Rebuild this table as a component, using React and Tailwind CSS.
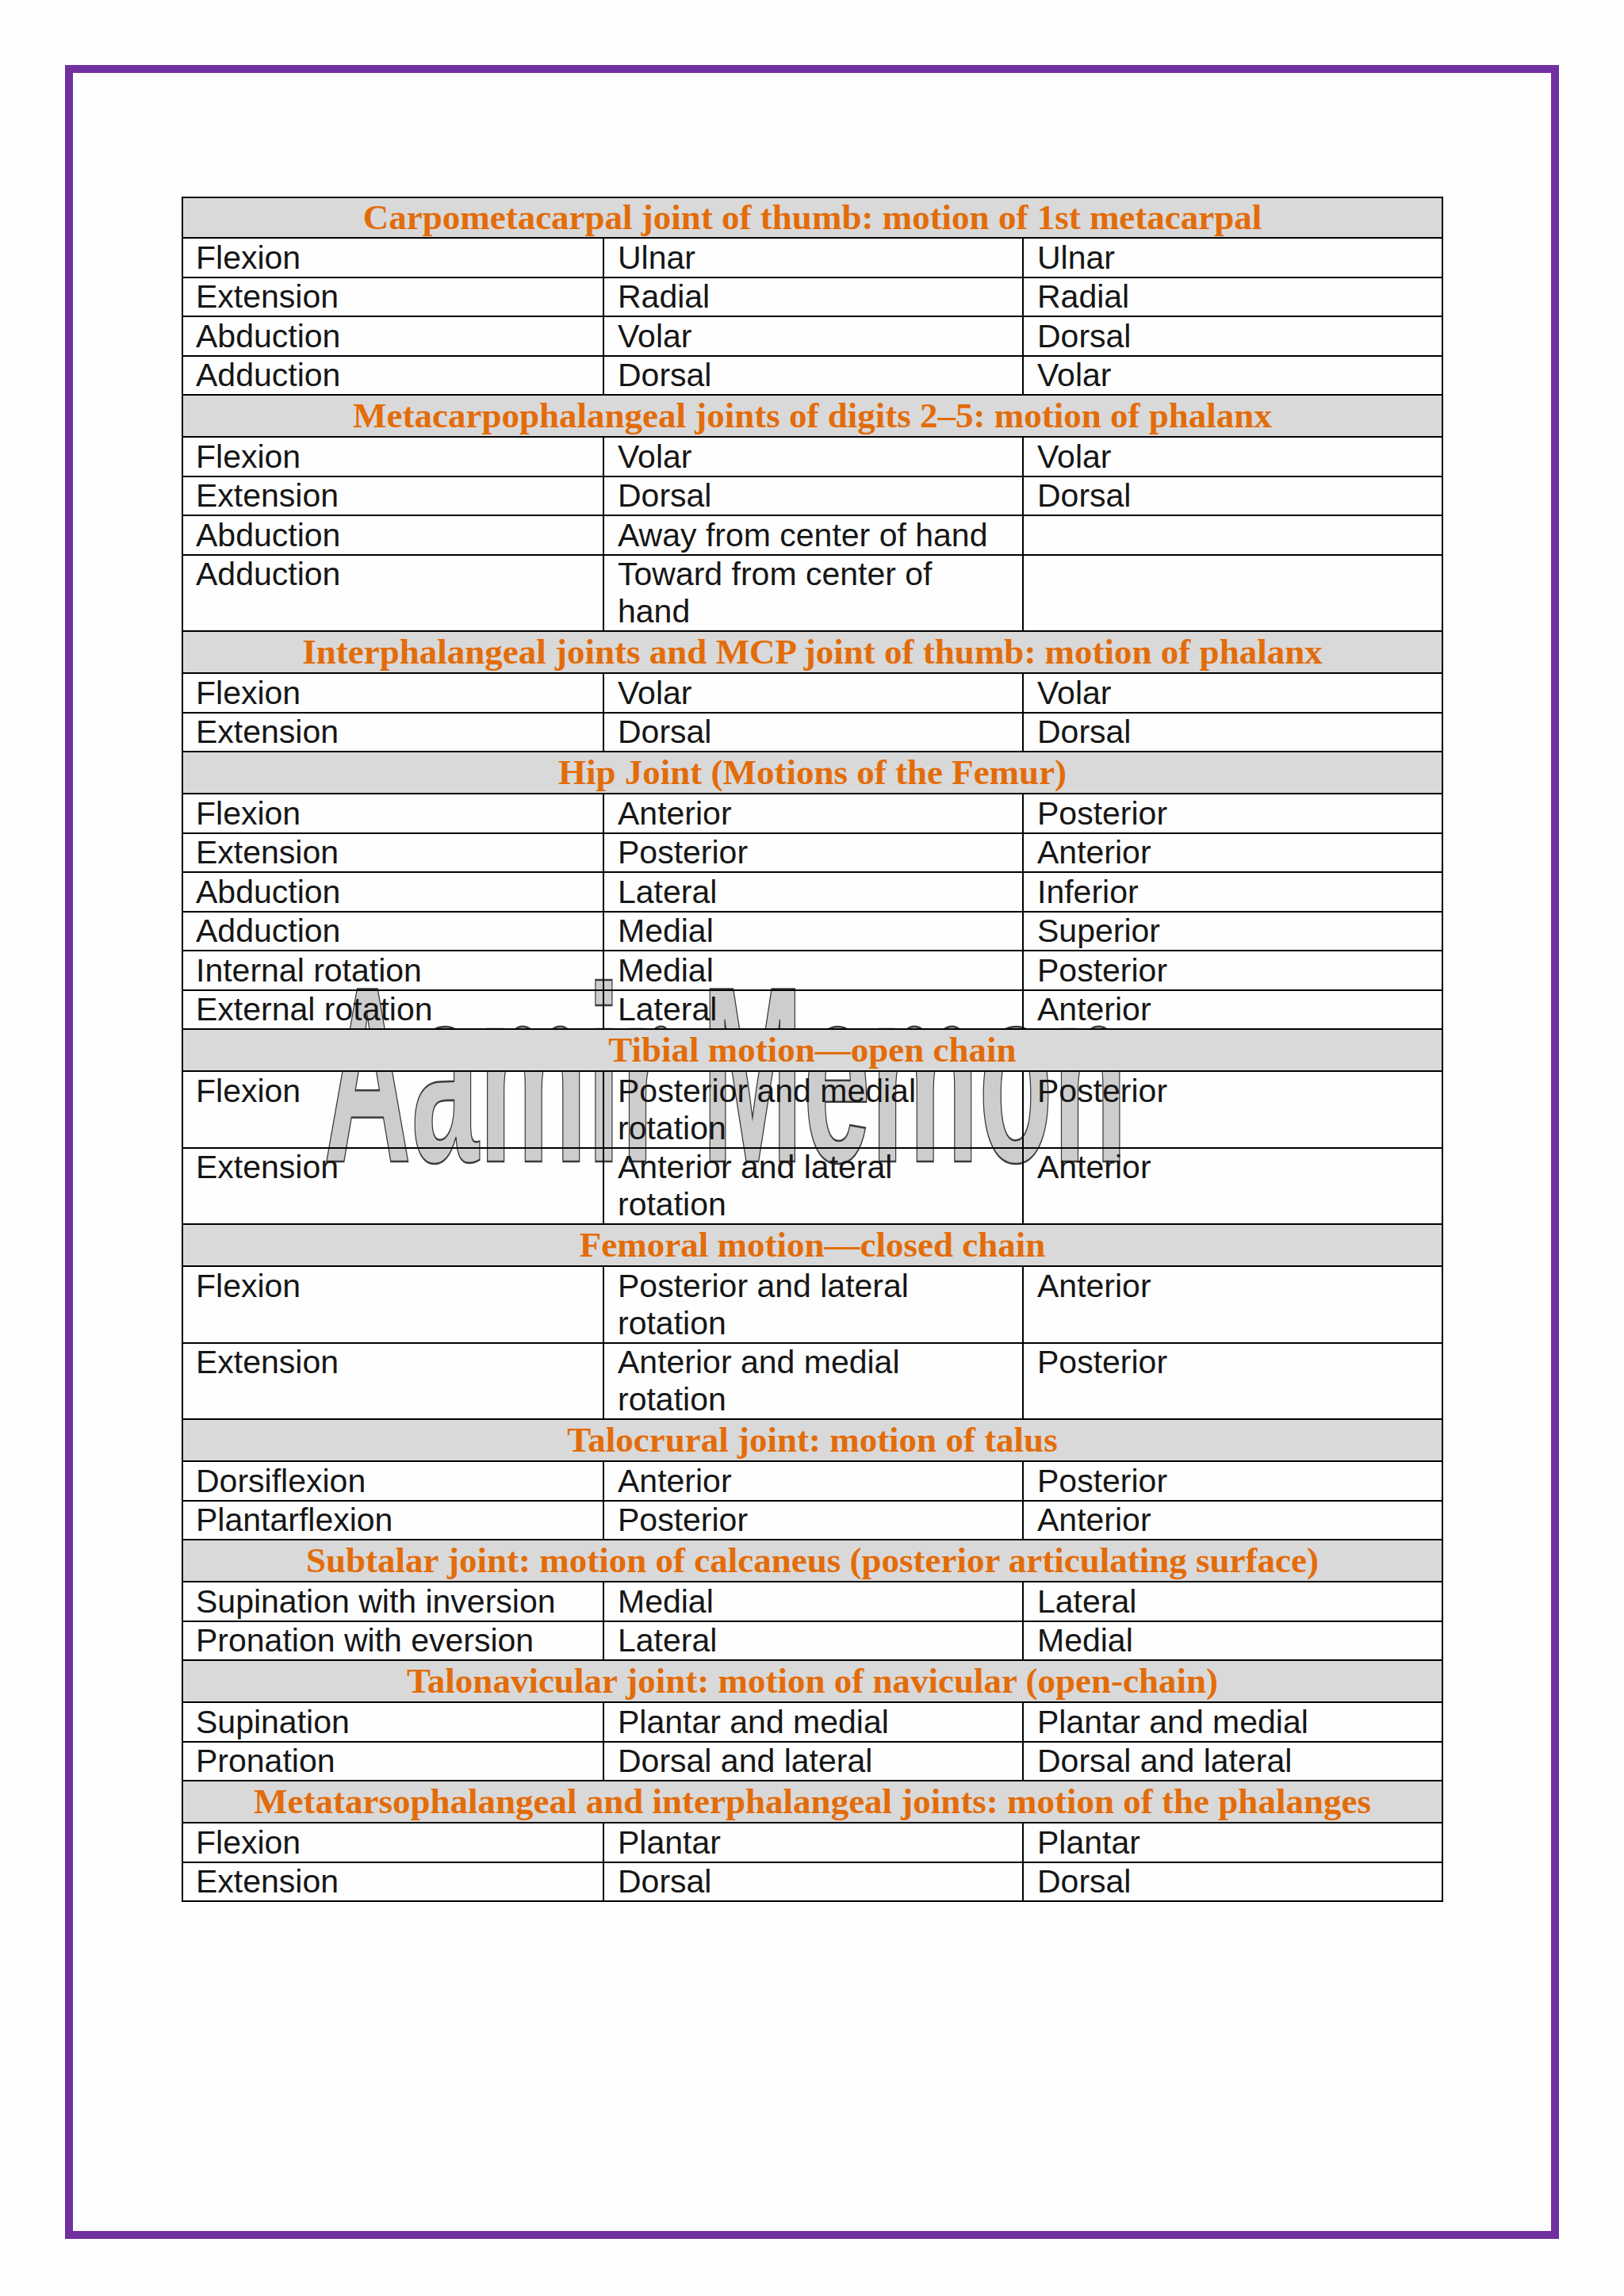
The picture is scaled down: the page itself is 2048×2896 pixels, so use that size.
const sections = [
  {
    title: "Carpometacarpal joint of thumb: motion of 1st metacarpal",
    rows: [
      ["Flexion", "Ulnar", "Ulnar"],
      ["Extension", "Radial", "Radial"],
      ["Abduction", "Volar", "Dorsal"],
      ["Adduction", "Dorsal", "Volar"],
    ],
  },
  {
    title: "Metacarpophalangeal joints of digits 2–5: motion of phalanx",
    rows: [
      ["Flexion", "Volar", "Volar"],
      ["Extension", "Dorsal", "Dorsal"],
      ["Abduction", "Away from center of hand", ""],
      ["Adduction", "Toward from center of hand", ""],
    ],
  },
  {
    title: "Interphalangeal joints and MCP joint of thumb: motion of phalanx",
    rows: [
      ["Flexion", "Volar", "Volar"],
      ["Extension", "Dorsal", "Dorsal"],
    ],
  },
  {
    title: "Hip Joint (Motions of the Femur)",
    rows: [
      ["Flexion", "Anterior", "Posterior"],
      ["Extension", "Posterior", "Anterior"],
      ["Abduction", "Lateral", "Inferior"],
      ["Adduction", "Medial", "Superior"],
      ["Internal rotation", "Medial", "Posterior"],
      ["External rotation", "Lateral", "Anterior"],
    ],
  },
  {
    title: "Tibial motion—open chain",
    rows: [
      ["Flexion", "Posterior and medial rotation", "Posterior"],
      ["Extension", "Anterior and lateral rotation", "Anterior"],
    ],
  },
  {
    title: "Femoral motion—closed chain",
    rows: [
      ["Flexion", "Posterior and lateral rotation", "Anterior"],
      ["Extension", "Anterior and medial rotation", "Posterior"],
    ],
  },
  {
    title: "Talocrural joint: motion of talus",
    rows: [
      ["Dorsiflexion", "Anterior", "Posterior"],
      ["Plantarflexion", "Posterior", "Anterior"],
    ],
  },
  {
    title: "Subtalar joint: motion of calcaneus (posterior articulating surface)",
    rows: [
      ["Supination with inversion", "Medial", "Lateral"],
      ["Pronation with eversion", "Lateral", "Medial"],
    ],
  },
  {
    title: "Talonavicular joint: motion of navicular (open-chain)",
    rows: [
      ["Supination", "Plantar and medial", "Plantar and medial"],
      ["Pronation", "Dorsal and lateral", "Dorsal and lateral"],
    ],
  },
  {
    title: "Metatarsophalangeal and interphalangeal joints: motion of the phalanges",
    rows: [
      ["Flexion", "Plantar", "Plantar"],
      ["Extension", "Dorsal", "Dorsal"],
    ],
  },
];

const Header = ({ title }) => (
  <div className="h-[53px] first:h-[51px] flex items-center justify-center bg-[#d9d9d9] font-['Liberation_Serif',serif] font-bold text-[45px] text-[#e36c0a]">
    {title}
  </div>
);

const Row = ({ cells }) => (
  <div className="grid grid-cols-3 text-[41px] leading-[47px] text-[#161616] font-['Liberation_Sans',Arial,sans-serif]">
    <div className="px-[16px] pt-[0.5px]">{cells[0]}</div>
    <div className="border-l-2 border-black px-[17px] pt-[0.5px]">{cells[1]}</div>
    <div className="border-l-2 border-black px-[17px] pt-[0.5px]">{cells[2]}</div>
  </div>
);

export default function App() {
  return (
    <div className="w-[2048px] h-[2896px] bg-[#fefefe] pt-[82px] pl-[82px]">
      <div className="relative w-[1884px] h-[2742px] border-[10px] border-[#7030a0] pt-[156px] pl-[137px]">
        {/* watermark sits behind the table; header bands cover it */}
        <div className="absolute left-[316px] top-[1106px] origin-left scale-x-[0.485] whitespace-nowrap font-['Liberation_Sans',Arial,sans-serif] font-bold text-[316px] leading-none text-[#cdcdcd] [-webkit-text-stroke:2.5px_#3a3a3a]">
          Aamir Memon
        </div>

        <div className="relative w-[1591px] border-2 border-black divide-y-2 divide-black">
          {sections.map((s) => (
            <>
              <Header key={s.title} title={s.title} />
              {s.rows.map((r, i) => (
                <Row key={s.title + i} cells={r} />
              ))}
            </>
          ))}
        </div>
      </div>
    </div>
  );
}
